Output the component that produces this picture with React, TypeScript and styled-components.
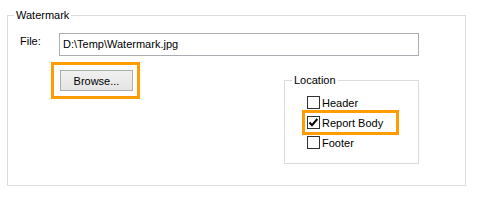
import React from 'react'
import styled, { createGlobalStyle } from 'styled-components'

const GlobalStyle = createGlobalStyle`
    body {
        margin: 0;
        background: #fff;
        color: #000;
        font-family: "Liberation Sans", Arial, sans-serif;
        font-size: 11px;
    }
`

const GroupBox = styled.fieldset<{ $width: number; $height: number }>`
    box-sizing: border-box;
    width: ${p => p.$width}px;
    height: ${p => p.$height}px;
    margin: 0;
    padding: 0;
    border: 1px solid #dcdcdc;
    min-inline-size: 0;
`

const Legend = styled.legend`
    margin-left: 6px;
    padding: 0 2px;
    line-height: 14px;
`

const Outer = styled(GroupBox)`
    margin: 8px 0 0 7px;
`

const FileRow = styled.div`
    display: flex;
    align-items: flex-start;
    margin-top: 11px;
    padding-left: 12px;
`

const FieldLabel = styled.label`
    width: 39px;
    margin-top: 1px;
    line-height: 14px;
`

const TextBox = styled.div`
    box-sizing: border-box;
    width: 360px;
    height: 23px;
    padding: 0 3px;
    border: 1px solid #abadb3;
    line-height: 21px;
`

const LowerRow = styled.div`
    display: flex;
    align-items: flex-start;
    margin-top: 6px;
    padding-left: 43px;
`

const Highlight = styled.div`
    border: 3px solid #ff9c00;
    padding: 5px 4px 5px 6px;
`

const Button = styled.button`
    box-sizing: border-box;
    display: block;
    width: 73px;
    height: 21px;
    padding: 0;
    border: 1px solid #adadad;
    background: linear-gradient(#f0f0f0, #e5e5e5);
    font: inherit;
    color: #000;
`

const Location = styled(GroupBox)`
    margin: 11px 0 0 144px;
`

const LocationLegend = styled(Legend)`
    margin-left: 7px;
`

const Options = styled.div`
    display: flex;
    flex-direction: column;
    align-items: flex-start;
    gap: 3px;
    padding: 7px 0 0 21px;
`

const OptionRow = styled.label<{ $marked?: boolean }>`
    display: flex;
    align-items: center;
    gap: 2px;
    height: 17px;
    padding: 0 12px 0 1px;
    outline: ${p => (p.$marked ? '3px solid #ff9c00' : 'none')};
    outline-offset: 1px;
`

const Box = styled.span`
    box-sizing: border-box;
    display: flex;
    align-items: center;
    justify-content: center;
    width: 13px;
    height: 13px;
    border: 1px solid #333;
    background: #fff;
`

function CheckOption({ label, checked, marked }: { label: string; checked?: boolean; marked?: boolean }) {
    return (
        <OptionRow $marked={marked}>
            <Box>
                {checked && (
                    <svg width="11" height="11" viewBox="0 0 11 11">
                        <path d="M1.5 5.5 L4 8.2 L9.3 2" fill="none" stroke="#000" strokeWidth="2" />
                    </svg>
                )}
            </Box>
            {label}
        </OptionRow>
    )
}

export default function App() {
    return (
        <>
            <GlobalStyle />
            <Outer $width={459} $height={178}>
                <Legend>Watermark</Legend>
                <FileRow>
                    <FieldLabel>File:</FieldLabel>
                    <TextBox>D:\Temp\Watermark.jpg</TextBox>
                </FileRow>
                <LowerRow>
                    <Highlight>
                        <Button>Browse...</Button>
                    </Highlight>
                    <Location $width={135} $height={91}>
                        <LocationLegend>Location</LocationLegend>
                        <Options>
                            <CheckOption label="Header" />
                            <CheckOption label="Report Body" checked marked />
                            <CheckOption label="Footer" />
                        </Options>
                    </Location>
                </LowerRow>
            </Outer>
        </>
    )
}
